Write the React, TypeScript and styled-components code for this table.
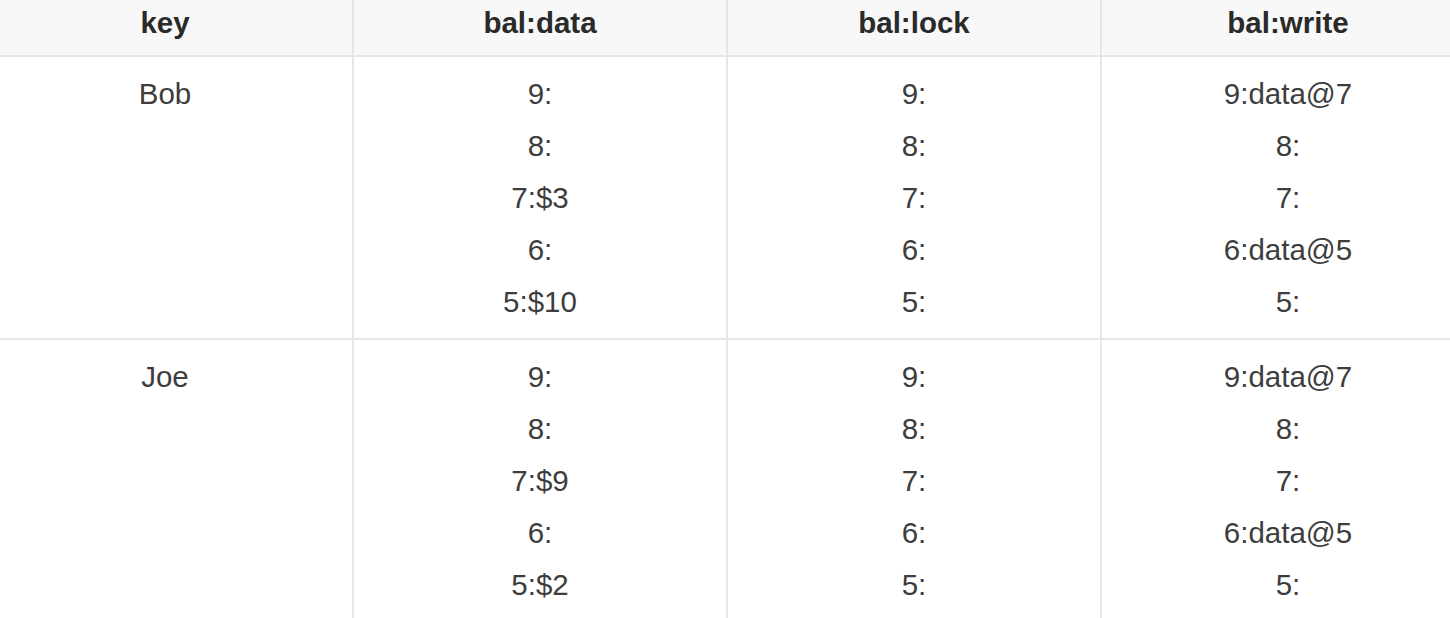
import React from "react";
import styled, { createGlobalStyle } from "styled-components";

const Global = createGlobalStyle`
  html, body {
    margin: 0;
    padding: 0;
    background: #ffffff;
    overflow: hidden;
  }
  body {
    font-family: "Liberation Sans", Arial, sans-serif;
  }
`;

const Viewport = styled.div`
  width: 1450px;
  height: 618px;
  overflow: hidden;
  background: #ffffff;
`;

const Table = styled.table`
  margin-left: -22px;
  border-collapse: separate;
  border-spacing: 0;
  table-layout: fixed;
  width: 1496px;
  font-family: "Liberation Sans", Arial, sans-serif;
  font-size: 29.5px;
  color: #333333;
`;

const Col = styled.col`
  width: 374px;
`;

const HeadCell = styled.th<{ $first?: boolean }>`
  box-sizing: border-box;
  height: 57px;
  padding: 0;
  vertical-align: top;
  line-height: 46px;
  font-weight: 700;
  color: #2a2a2a;
  text-align: center;
  background: #f8f8f8;
  border-left: ${(p) => (p.$first ? "none" : "2px solid #e6e6e6")};
  border-bottom: 2px solid #e6e6e6;
`;

const Cell = styled.td<{ $first?: boolean; $last?: boolean }>`
  box-sizing: border-box;
  padding: 11px 0 10px;
  vertical-align: top;
  text-align: center;
  line-height: 52px;
  color: #3d3d3d;
  border-left: ${(p) => (p.$first ? "none" : "2px solid #e6e6e6")};
  border-bottom: ${(p) => (p.$last ? "none" : "2px solid #e6e6e6")};
`;

const Line = styled.div`
  white-space: nowrap;
`;

type Row = { key: string; data: string[]; lock: string[]; write: string[] };

const rows: Row[] = [
  {
    key: "Bob",
    data: ["9:", "8:", "7:$3", "6:", "5:$10"],
    lock: ["9:", "8:", "7:", "6:", "5:"],
    write: ["9:data@7", "8:", "7:", "6:data@5", "5:"],
  },
  {
    key: "Joe",
    data: ["9:", "8:", "7:$9", "6:", "5:$2"],
    lock: ["9:", "8:", "7:", "6:", "5:"],
    write: ["9:data@7", "8:", "7:", "6:data@5", "5:"],
  },
];

const Lines = ({ items }: { items: string[] }) => (
  <>
    {items.map((t, i) => (
      <Line key={i}>{t}</Line>
    ))}
  </>
);

export default function App() {
  return (
    <Viewport>
      <Global />
      <Table>
        <colgroup>
          <Col />
          <Col />
          <Col />
          <Col />
        </colgroup>
        <thead>
          <tr>
            <HeadCell $first>key</HeadCell>
            <HeadCell>bal:data</HeadCell>
            <HeadCell>bal:lock</HeadCell>
            <HeadCell>bal:write</HeadCell>
          </tr>
        </thead>
        <tbody>
          {rows.map((r, idx) => {
            const last = idx === rows.length - 1;
            return (
              <tr key={r.key}>
                <Cell $first $last={last}>
                  <Line>{r.key}</Line>
                </Cell>
                <Cell $last={last}>
                  <Lines items={r.data} />
                </Cell>
                <Cell $last={last}>
                  <Lines items={r.lock} />
                </Cell>
                <Cell $last={last}>
                  <Lines items={r.write} />
                </Cell>
              </tr>
            );
          })}
        </tbody>
      </Table>
    </Viewport>
  );
}
